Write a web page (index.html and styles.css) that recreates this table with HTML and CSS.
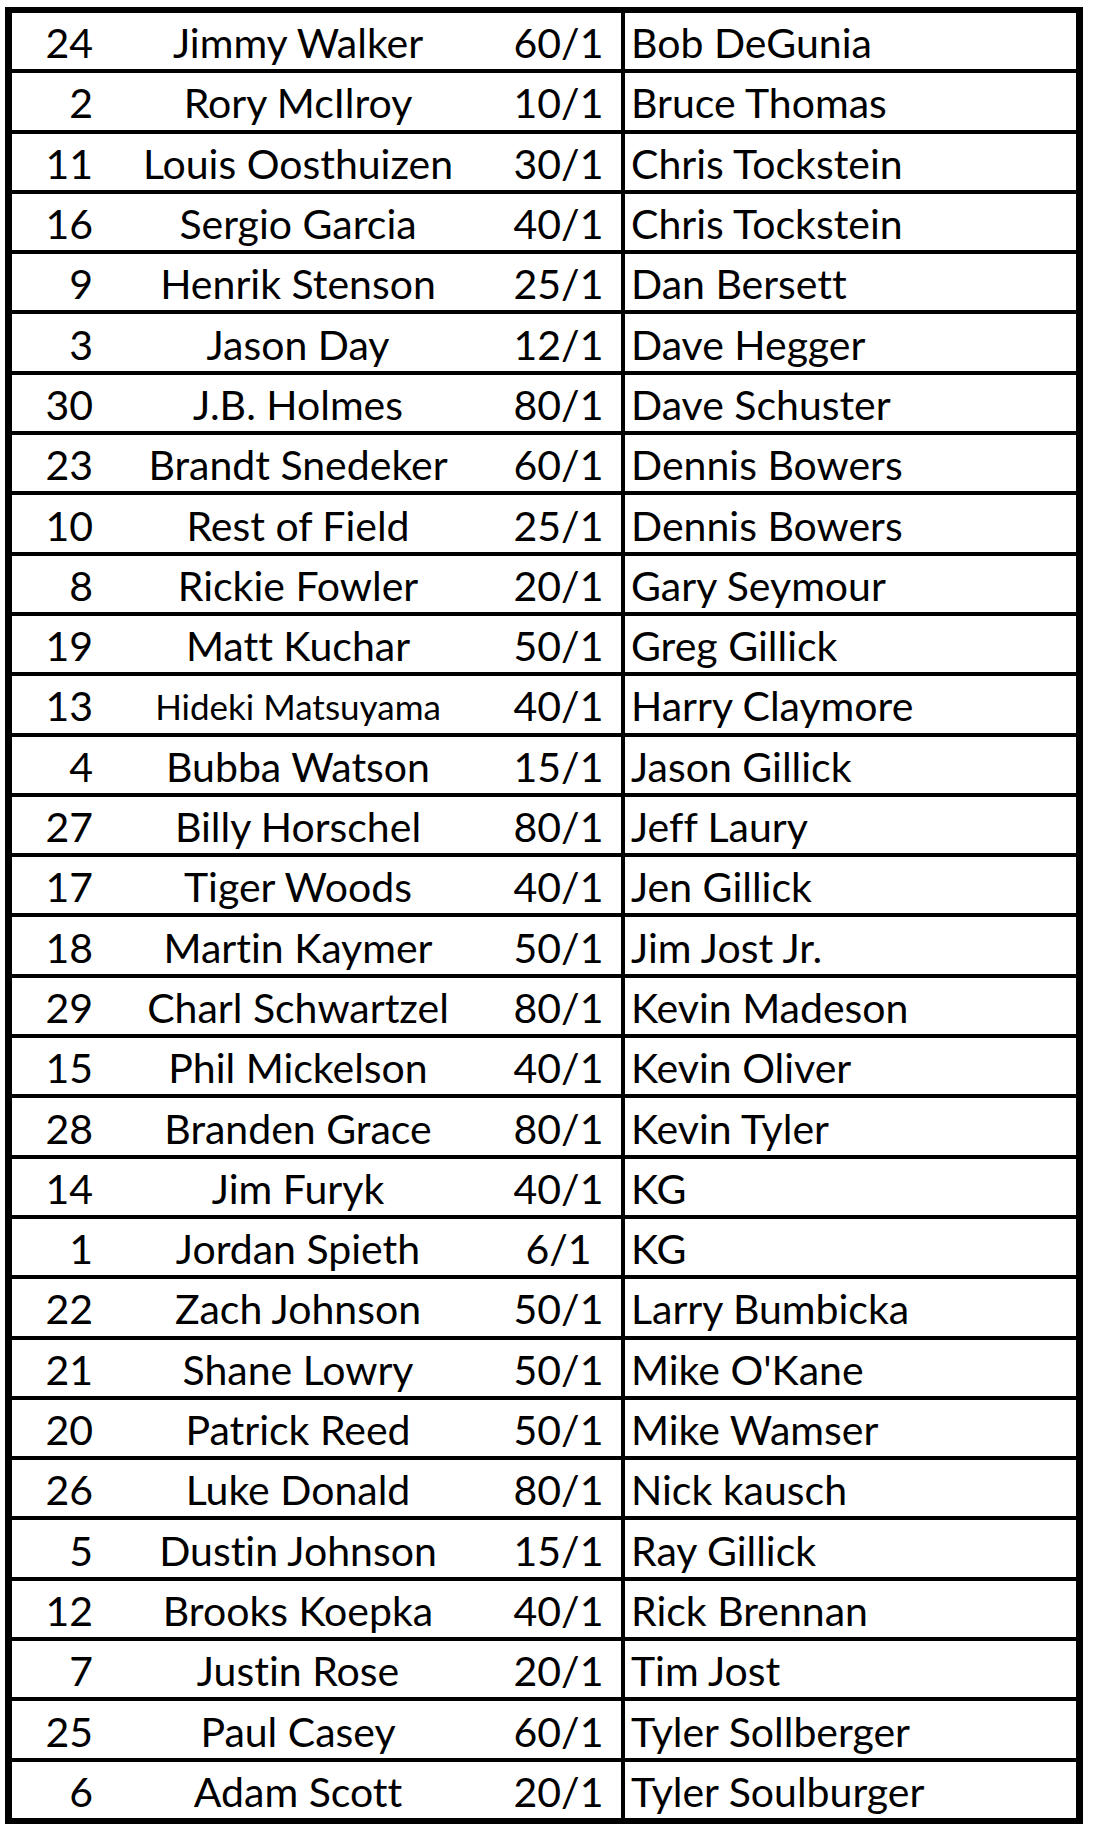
FILE: index.html
```html
<!DOCTYPE html>
<html>
<head>
<meta charset="utf-8">
<link rel="stylesheet" href="styles.css">
</head>
<body>
<div class="sheet">
  <div class="row"><span class="num">24</span><span class="name">Jimmy Walker</span><span class="odds">60/1</span><span class="owner">Bob DeGunia</span></div>
  <div class="row"><span class="num">2</span><span class="name">Rory McIlroy</span><span class="odds">10/1</span><span class="owner">Bruce Thomas</span></div>
  <div class="row"><span class="num">11</span><span class="name">Louis Oosthuizen</span><span class="odds">30/1</span><span class="owner">Chris Tockstein</span></div>
  <div class="row"><span class="num">16</span><span class="name">Sergio Garcia</span><span class="odds">40/1</span><span class="owner">Chris Tockstein</span></div>
  <div class="row"><span class="num">9</span><span class="name">Henrik Stenson</span><span class="odds">25/1</span><span class="owner">Dan Bersett</span></div>
  <div class="row"><span class="num">3</span><span class="name">Jason Day</span><span class="odds">12/1</span><span class="owner">Dave Hegger</span></div>
  <div class="row"><span class="num">30</span><span class="name">J.B. Holmes</span><span class="odds">80/1</span><span class="owner">Dave Schuster</span></div>
  <div class="row"><span class="num">23</span><span class="name">Brandt Snedeker</span><span class="odds">60/1</span><span class="owner">Dennis Bowers</span></div>
  <div class="row"><span class="num">10</span><span class="name">Rest of Field</span><span class="odds">25/1</span><span class="owner">Dennis Bowers</span></div>
  <div class="row"><span class="num">8</span><span class="name">Rickie Fowler</span><span class="odds">20/1</span><span class="owner">Gary Seymour</span></div>
  <div class="row"><span class="num">19</span><span class="name">Matt Kuchar</span><span class="odds">50/1</span><span class="owner">Greg Gillick</span></div>
  <div class="row"><span class="num">13</span><span class="name small">Hideki Matsuyama</span><span class="odds">40/1</span><span class="owner">Harry Claymore</span></div>
  <div class="row"><span class="num">4</span><span class="name">Bubba Watson</span><span class="odds">15/1</span><span class="owner">Jason Gillick</span></div>
  <div class="row"><span class="num">27</span><span class="name">Billy Horschel</span><span class="odds">80/1</span><span class="owner">Jeff Laury</span></div>
  <div class="row"><span class="num">17</span><span class="name">Tiger Woods</span><span class="odds">40/1</span><span class="owner">Jen Gillick</span></div>
  <div class="row"><span class="num">18</span><span class="name">Martin Kaymer</span><span class="odds">50/1</span><span class="owner">Jim Jost Jr.</span></div>
  <div class="row"><span class="num">29</span><span class="name">Charl Schwartzel</span><span class="odds">80/1</span><span class="owner">Kevin Madeson</span></div>
  <div class="row"><span class="num">15</span><span class="name">Phil Mickelson</span><span class="odds">40/1</span><span class="owner">Kevin Oliver</span></div>
  <div class="row"><span class="num">28</span><span class="name">Branden Grace</span><span class="odds">80/1</span><span class="owner">Kevin Tyler</span></div>
  <div class="row"><span class="num">14</span><span class="name">Jim Furyk</span><span class="odds">40/1</span><span class="owner">KG</span></div>
  <div class="row"><span class="num">1</span><span class="name">Jordan Spieth</span><span class="odds">6/1</span><span class="owner">KG</span></div>
  <div class="row"><span class="num">22</span><span class="name">Zach Johnson</span><span class="odds">50/1</span><span class="owner">Larry Bumbicka</span></div>
  <div class="row"><span class="num">21</span><span class="name">Shane Lowry</span><span class="odds">50/1</span><span class="owner">Mike O'Kane</span></div>
  <div class="row"><span class="num">20</span><span class="name">Patrick Reed</span><span class="odds">50/1</span><span class="owner">Mike Wamser</span></div>
  <div class="row"><span class="num">26</span><span class="name">Luke Donald</span><span class="odds">80/1</span><span class="owner">Nick kausch</span></div>
  <div class="row"><span class="num">5</span><span class="name">Dustin Johnson</span><span class="odds">15/1</span><span class="owner">Ray Gillick</span></div>
  <div class="row"><span class="num">12</span><span class="name">Brooks Koepka</span><span class="odds">40/1</span><span class="owner">Rick Brennan</span></div>
  <div class="row"><span class="num">7</span><span class="name">Justin Rose</span><span class="odds">20/1</span><span class="owner">Tim Jost</span></div>
  <div class="row"><span class="num">25</span><span class="name">Paul Casey</span><span class="odds">60/1</span><span class="owner">Tyler Sollberger</span></div>
  <div class="row"><span class="num">6</span><span class="name">Adam Scott</span><span class="odds">20/1</span><span class="owner">Tyler Soulburger</span></div>
</div>
</body>
</html>
```

FILE: styles.css
```css
html, body {
  margin: 0;
  padding: 0;
  background: #ffffff;
}

body {
  font-family: Lato, "Liberation Sans", sans-serif;
  color: #000000;
  font-variant-ligatures: none;
  font-feature-settings: "liga" 0, "clig" 0;
}

.sheet {
  box-sizing: border-box;
  margin: 7px 0 0 5px;
  width: 1078px;
  height: 1817px;
  border-style: solid;
  border-color: #000000;
  border-width: 6px 7px;
  background: #000000;
  display: grid;
  grid-template-rows: repeat(30, 1fr);
  row-gap: 4px;
}

.row {
  background: #ffffff;
  display: grid;
  grid-template-columns: 88px 396px 125px 1fr;
  align-items: center;
  font-size: 41px;
  line-height: 48px;
  padding-top: 4px;
  min-height: 0;
  overflow: hidden;
}

.num {
  text-align: right;
  padding-right: 7px;
}

.name {
  text-align: center;
  white-space: nowrap;
}

.name.small {
  font-size: 35px;
}

.odds {
  text-align: center;
}

.owner {
  align-self: stretch;
  border-left: 4px solid #000000;
  padding-left: 6px;
  margin-top: -4px;
  padding-top: 4px;
  display: flex;
  align-items: center;
  white-space: nowrap;
}
```
